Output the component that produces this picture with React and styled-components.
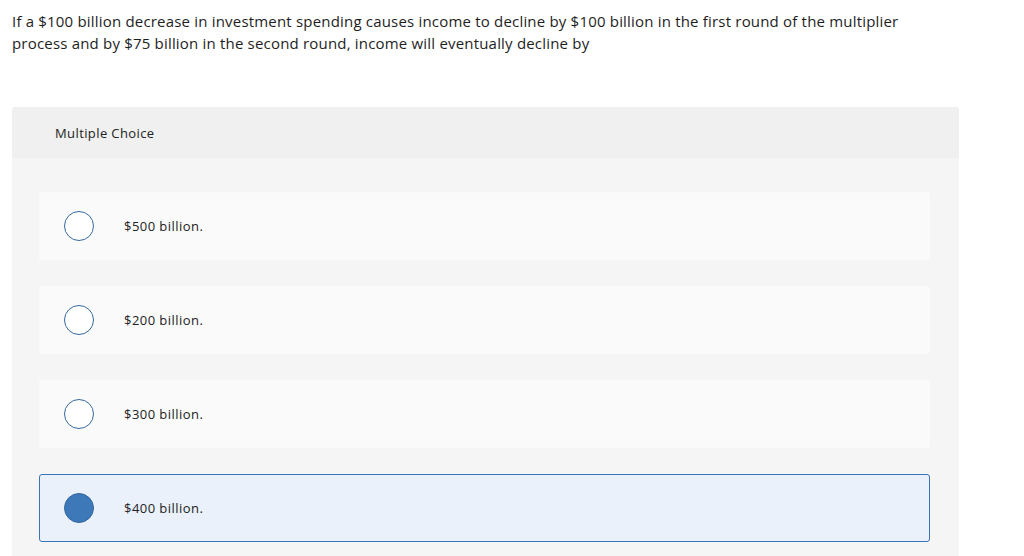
import React, { useState } from "react";
import styled, { createGlobalStyle } from "styled-components";

const GlobalStyle = createGlobalStyle`
  body {
    margin: 0;
    background: #ffffff;
    font-family: "Open Sans", "Lato", sans-serif;
    color: #222222;
  }
`;

const Page = styled.div`
  box-sizing: border-box;
  width: 1024px;
  padding: 10px 65px 0 12px;
`;

const Question = styled.p`
  margin: 0;
  font-size: 15px;
  line-height: 22px;
  letter-spacing: 0.19px;
  color: #1e1e1e;
`;

const Panel = styled.section`
  margin-top: 53px;
  border-radius: 3px 3px 0 0;
  background: #f5f5f5;
  overflow: hidden;
`;

const PanelHeader = styled.div`
  height: 51px;
  display: flex;
  align-items: center;
  padding-left: 43px;
  background: #f0f0f0;
  font-size: 13px;
  letter-spacing: 0.4px;
  color: #222222;
`;

const OptionList = styled.div`
  display: flex;
  flex-direction: column;
  gap: 26px;
  padding: 34px 29px 20px 27px;
`;

const Option = styled.label`
  box-sizing: border-box;
  height: 68px;
  display: flex;
  align-items: center;
  padding-left: 24px;
  border-radius: 3px;
  border: 1px solid ${(props) => (props.$selected ? "#3a74b8" : "transparent")};
  background: ${(props) => (props.$selected ? "#eaf1fa" : "#fafafa")};
  cursor: pointer;
`;

const Radio = styled.span`
  box-sizing: border-box;
  width: 30px;
  height: 30px;
  flex: 0 0 30px;
  border-radius: 50%;
  border: 1.5px solid #35689f;
  background: ${(props) => (props.$checked ? "#3d78b9" : "#ffffff")};
`;

const OptionText = styled.span`
  margin-left: 30px;
  font-size: 13px;
  letter-spacing: 0.45px;
  color: #222222;
`;

const choices = ["$500 billion.", "$200 billion.", "$300 billion.", "$400 billion."];

const App = () => {
  const [picked, setPicked] = useState(3);

  return (
    <Page>
      <GlobalStyle />
      <Question>
        If a $100 billion decrease in investment spending causes income to decline by $100 billion in the first round of the multiplier
        <br />
        process and by $75 billion in the second round, income will eventually decline by
      </Question>
      <Panel>
        <PanelHeader>Multiple Choice</PanelHeader>
        <OptionList>
          {choices.map((text, index) => (
            <Option key={index} $selected={picked === index} onClick={() => setPicked(index)}>
              <Radio $checked={picked === index} />
              <OptionText>{text}</OptionText>
            </Option>
          ))}
        </OptionList>
      </Panel>
    </Page>
  );
};

export default App;
